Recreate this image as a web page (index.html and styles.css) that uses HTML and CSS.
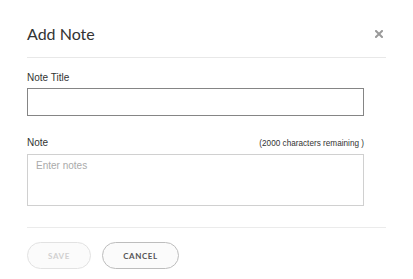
FILE: index.html
```html
<!DOCTYPE html>
<html>
<head>
<meta charset="utf-8">
<link rel="stylesheet" href="styles.css">
</head>
<body>
<div class="modal">
  <div class="modal-header">
    <h2 class="modal-title">Add Note</h2>
    <button class="close" aria-label="Close">
      <svg width="8" height="8" viewBox="0 0 8 8"><path d="M1 1L7 7M7 1L1 7" stroke="#9a9a9a" stroke-width="2" stroke-linecap="square"/></svg>
    </button>
  </div>
  <div class="modal-body">
    <label class="field-label">Note Title</label>
    <input class="title-input" type="text">
    <div class="note-row">
      <label class="field-label">Note</label>
      <span class="counter">(2000 characters remaining )</span>
    </div>
    <textarea class="note-input" placeholder="Enter notes"></textarea>
  </div>
  <div class="modal-footer">
    <button class="btn btn-disabled" disabled>SAVE</button>
    <button class="btn btn-cancel">CANCEL</button>
  </div>
</div>
</body>
</html>
```

FILE: styles.css
```css
* { box-sizing: border-box; }
html, body { margin: 0; padding: 0; background: #fff; }
.modal {
  width: 413px;
  padding: 0 27px;
  font-family: "Liberation Sans", Arial, sans-serif;
}
.modal-header {
  display: flex;
  justify-content: space-between;
  align-items: center;
  padding: 24px 0 13px;
  border-bottom: 1px solid #e8e8e8;
}
.modal-title {
  margin: 0;
  font-family: Lato, sans-serif;
  font-weight: 400;
  font-size: 16px;
  line-height: 20px;
  color: #333;
}
.close {
  border: 0;
  background: none;
  padding: 0;
  margin: 0 3px 0 0;
  width: 8px;
  height: 8px;
  display: flex;
}
.modal-body {
  display: flex;
  flex-direction: column;
  padding: 14px 22px 21px 0;
  border-bottom: 1px solid #ebebeb;
}
.field-label {
  display: block;
  font-size: 10px;
  line-height: 12px;
  color: #333;
  margin-bottom: 4px;
}
.title-input {
  height: 28px;
  border: 1px solid #858585;
  margin: 0;
  padding: 0 8px;
  font-family: inherit;
  font-size: 10px;
}
.note-row {
  display: flex;
  justify-content: space-between;
  align-items: baseline;
  margin-top: 21px;
  margin-bottom: 1px;
}
.note-row .field-label { margin-bottom: 4px; }
.counter {
  font-size: 8.2px;
  color: #333;
}
.note-input {
  height: 52px;
  border: 1px solid #d0d0d0;
  margin: 0;
  padding: 5px 8px;
  resize: none;
  font-family: inherit;
  font-size: 10px;
  line-height: 12px;
}
.note-input::placeholder { color: #aaa; }
.modal-footer {
  display: flex;
  gap: 11px;
  padding-top: 14px;
}
.btn {
  height: 27px;
  border-radius: 14px;
  font-family: Lato, sans-serif;
  font-weight: 700;
  font-size: 8px;
  letter-spacing: 0.6px;
  padding: 0;
  background: #fbfbfb;
}
.btn-disabled {
  width: 64px;
  border: 1px solid #e2e2e2;
  color: #d0d0d0;
}
.btn-cancel {
  width: 77px;
  border: 1px solid #bdbdbd;
  color: #555;
}
```
